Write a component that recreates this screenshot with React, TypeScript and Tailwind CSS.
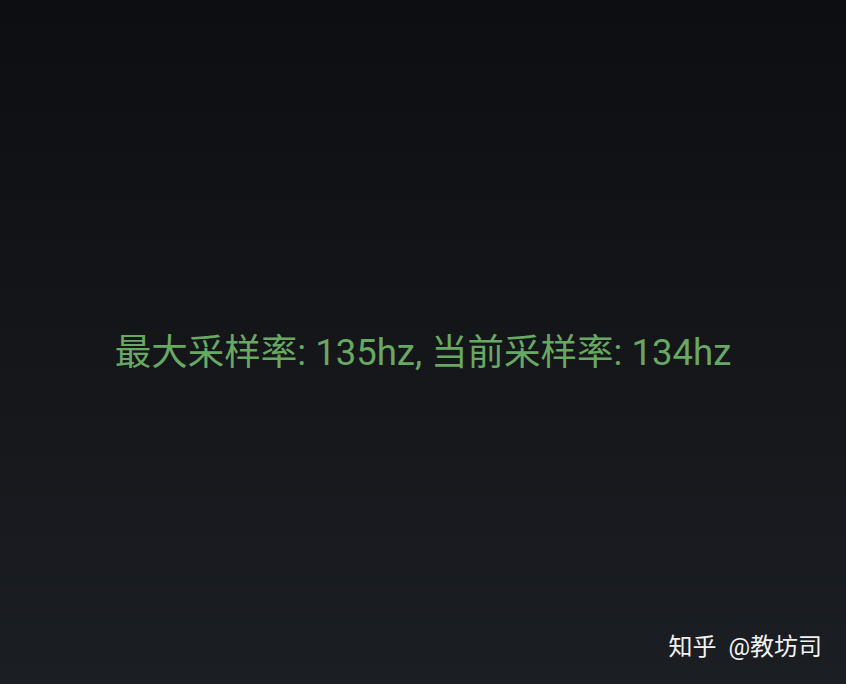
export default function App() {
  return (
    <div
      className="relative w-[846px] h-[684px] overflow-hidden bg-gradient-to-b from-[#0d0e11] to-[#1b1e23] flex items-center justify-center"
      style={{ fontFamily: 'Roboto, "Noto Sans CJK SC", sans-serif' }}
    >
      <div className="mt-[22px] text-[36.5px] leading-none text-[#68a862] whitespace-nowrap">
        最大采样率: 135hz, 当前采样率: 134hz
      </div>
      <div className="absolute right-[24px] bottom-[25px] text-[24px] leading-none text-[#f2f2f2] whitespace-nowrap">
        知乎&nbsp;&nbsp;@教坊司
      </div>
    </div>
  );
}
